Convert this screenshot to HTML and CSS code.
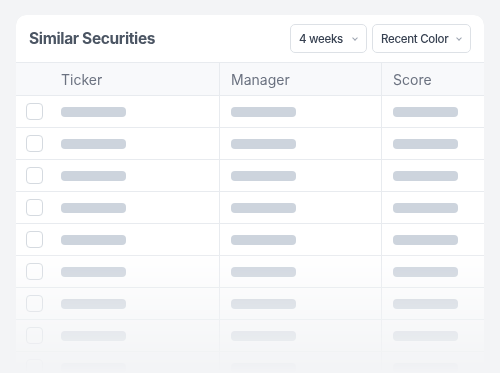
FILE: index.html
```html
<!DOCTYPE html>
<html lang="en">
<head>
    <meta charset="UTF-8">
    <title>Similar Securities</title>
    <link rel="stylesheet" href="styles.css">
</head>
<body>
    <div class="page">
        <div class="card">
            <div class="card-header">
                <h2>Similar Securities</h2>
                <div class="filters">
                    <button class="select select-period">4 weeks <span class="chevron"></span></button>
                    <button class="select select-color">Recent Color <span class="chevron"></span></button>
                </div>
            </div>

            <div class="grid">
                <div class="row head">
                    <div class="cell check"></div>
                    <div class="cell">Ticker</div>
                    <div class="cell divided">Manager</div>
                    <div class="cell divided">Score</div>
                </div>
            </div>
            <div class="grid" id="rows"></div>
        </div>
    </div>

    <script>
        const rows = document.getElementById('rows');
        for (let i = 0; i < 9; i++) {
            const row = document.createElement('div');
            row.className = 'row';
            row.innerHTML = `
                <div class="cell check"><span class="box"></span></div>
                <div class="cell"><span class="bar"></span></div>
                <div class="cell divided"><span class="bar"></span></div>
                <div class="cell divided"><span class="bar"></span></div>
            `;
            rows.appendChild(row);
        }
    </script>
</body>
</html>
```

FILE: styles.css
```css
:root {
    --page: #f3f4f6;
    --white: #ffffff;
    --line: #e8ebef;
    --head-bg: #f8f9fb;
    --text-title: #4b5563;
    --text-head: #6b7280;
    --text-select: #374151;
    --bar: #cdd4dd;
}

* {
    margin: 0;
    padding: 0;
    box-sizing: border-box;
}

html, body {
    height: 373px;
    overflow: hidden;
}

body {
    font-family: 'Inter', 'Liberation Sans', sans-serif;
    background-color: var(--page);
}

.page {
    padding: 15px 16px 0;
}

.card {
    background-color: var(--white);
    border-radius: 10px 10px 0 0;
    box-shadow: 0 1px 4px rgba(0, 0, 0, 0.04);
    height: 358px;
    overflow: hidden;
    -webkit-mask-image: linear-gradient(to bottom, #000 232px, transparent 358px);
    mask-image: linear-gradient(to bottom, #000 232px, transparent 358px);
}

.card-header {
    height: 47px;
    display: flex;
    align-items: center;
    justify-content: space-between;
    padding: 0 13px;
}

h2 {
    font-size: 15.5px;
    font-weight: 700;
    letter-spacing: -0.35px;
    color: var(--text-title);
}

.filters {
    display: flex;
    gap: 5px;
}

.select {
    height: 29px;
    display: flex;
    align-items: center;
    justify-content: space-between;
    padding: 0 9px 0 8px;
    background: var(--white);
    border: 1px solid #dde1e6;
    border-radius: 5px;
    font-family: inherit;
    font-size: 11.5px;
    font-weight: 500;
    letter-spacing: -0.3px;
    color: var(--text-select);
}

.select-period {
    width: 77px;
}

.select-color {
    width: 99px;
}

.chevron {
    width: 4px;
    height: 4px;
    border-right: 1px solid #9ca3af;
    border-bottom: 1px solid #9ca3af;
    transform: translateY(-1px) rotate(45deg);
}

.grid {
    border-top: 1px solid var(--line);
}

#rows {
    border-top: none;
}

.row {
    display: grid;
    grid-template-columns: 34px 169px 162px 1fr;
    height: 32px;
    border-bottom: 1px solid var(--line);
}

.row.head {
    height: 33px;
    background-color: var(--head-bg);
}

.cell {
    display: flex;
    align-items: center;
    padding-left: 11px;
    font-size: 14px;
    color: var(--text-head);
}

.cell.check {
    padding-left: 10px;
}

.cell.divided {
    border-left: 1px solid var(--line);
}

.box {
    width: 17px;
    height: 17px;
    border: 1px solid #d5dae0;
    border-radius: 4px;
}

.bar {
    width: 65px;
    height: 10px;
    border-radius: 4px;
    background-color: var(--bar);
}
```
